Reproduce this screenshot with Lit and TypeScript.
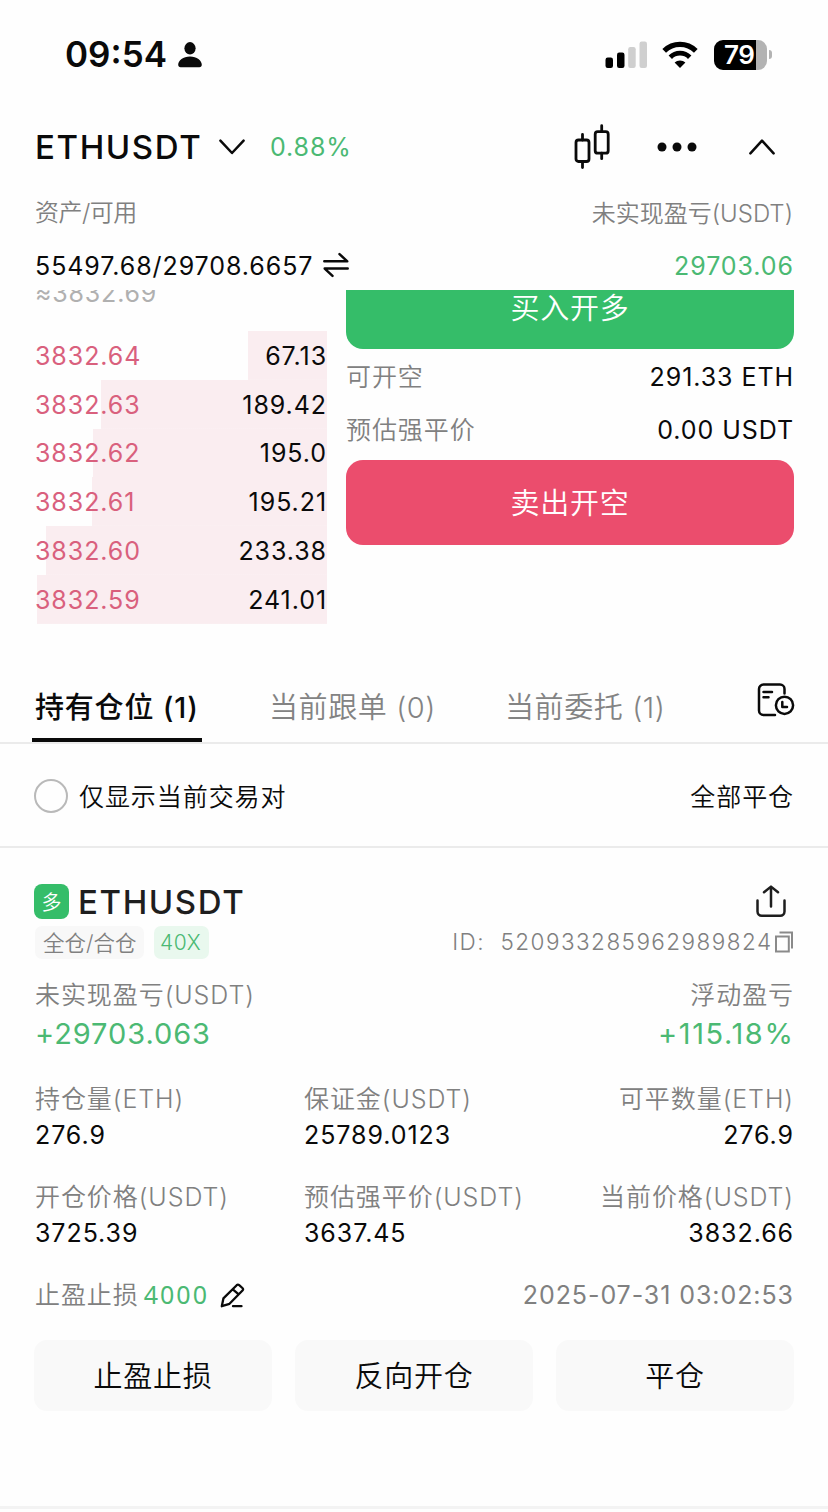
import { LitElement, html, css, svg } from "lit";
import { customElement, property } from "lit/decorators.js";

const asks = [
  { price: "3832.64", qty: "67.13", depth: 79 },
  { price: "3832.63", qty: "189.42", depth: 226 },
  { price: "3832.62", qty: "195.0", depth: 234 },
  { price: "3832.61", qty: "195.21", depth: 235 },
  { price: "3832.60", qty: "233.38", depth: 281 },
  { price: "3832.59", qty: "241.01", depth: 290 },
];

const stats = [
  { label: "持仓量(ETH)", value: "276.9" },
  { label: "保证金(USDT)", value: "25789.0123" },
  { label: "可平数量(ETH)", value: "276.9" },
  { label: "开仓价格(USDT)", value: "3725.39" },
  { label: "预估强平价(USDT)", value: "3637.45" },
  { label: "当前价格(USDT)", value: "3832.66" },
];

const icons: Record<string, { w: number; h: number; body: unknown }> = {
  person: { w: 24, h: 26, body: svg`<ellipse cx="12" cy="6.3" rx="5.6" ry="6.2" fill="currentColor"/><path d="M12 14.6c6.8 0 11.8 4 11.8 8.2 0 1.700-.9 2.400-2.400 2.400H2.600C1.100 25.200.2 24.500.2 22.800c0-4.200 5-8.200 11.800-8.200z" fill="currentColor"/>` },
  signal: { w: 42, h: 28, body: svg`<rect x=".5" y="16.500" width="7.500" height="10.500" rx="2.200" fill="#000"/><rect x="12" y="11.500" width="7.500" height="15.500" rx="2.200" fill="#000"/><rect x="23.200" y="6" width="7.500" height="21" rx="2.200" fill="#cfcfcf"/><rect x="34.500" y=".5" width="7.500" height="26.500" rx="2.200" fill="#cfcfcf"/>` },
  wifi: { w: 36, h: 28, body: svg`<path d="M2.200 9.900a22.500 22.500 0 0 1 31.600 0" fill="none" stroke="#000" stroke-width="5.200"/><path d="M8.300 16.200a13.700 13.700 0 0 1 19.400 0" fill="none" stroke="#000" stroke-width="4.800"/><path d="M18 27l-5.400-5.400a7.800 7.800 0 0 1 10.800 0z" fill="#000"/>` },
  down: { w: 26, h: 16, body: svg`<path d="M1.400 1.600L13 14 24.600 1.600" class="s25"/>` },
  up: { w: 26, h: 16, body: svg`<path d="M1.400 14.400L13 1.600 24.600 14.400" class="s25"/>` },
  candles: { w: 36, h: 46, body: svg`<g class="s25 heavy"><rect x="2" y="16" width="13" height="21.500" rx="2.500"/><path d="M8.500 10.500v5.500M8.500 37.500v6"/><rect x="21.200" y="7.700" width="13" height="21.500" rx="2.500"/><path d="M27.700 1.700v6M27.700 29.200v5.500"/></g>` },
  dots: { w: 40, h: 10, body: svg`<circle cx="5" cy="5" r="4.500" fill="currentColor"/><circle cx="20" cy="5" r="4.500" fill="currentColor"/><circle cx="35" cy="5" r="4.500" fill="currentColor"/>` },
  swap: { w: 26, h: 26, body: svg`<path d="M1.300 9.300h23l-7.800-7.200M24.700 16.600h-23l7.800 7.200" class="s25"/>` },
  history: { w: 38, h: 34, body: svg`<g class="s25"><path d="M18 32H6.500a4.500 4.500 0 0 1-4.500-4.500V6a4.500 4.500 0 0 1 4.500-4.500H23A4.500 4.500 0 0 1 27.500 6v4.500M6.500 9h8.500M6.500 14.200h5"/><circle cx="27.500" cy="22.300" r="8.600"/><path d="M25.300 19v5h4.700"/></g>` },
  share: { w: 30, h: 33, body: svg`<g class="s25"><path d="M1.500 15.500v11a4.300 4.300 0 0 0 4.300 4.300h18.400a4.300 4.300 0 0 0 4.300-4.300v-11"/><path d="M15 21.500V2M8 7.300L15 1.600l7 5.700"/></g>` },
  copy: { w: 19, h: 22, body: svg`<g fill="none" stroke="#8a8a8a" stroke-width="2"><rect x="2" y="5.500" width="12.800" height="15"/><path d="M5.500 1.500h12.500V17.500"/></g>` },
  pencil: { w: 25, h: 25, body: svg`<g class="s2"><path d="M16.700 2.200a1.800 1.800 0 0 1 2.500 0l3.200 2.800a1.800 1.800 0 0 1 .1 2.500L9.500 20.800 1.800 23.200l1.600-7.800zM12.800 6.300l5.900 5M13 23.200h8.500"/></g>` },
};

@customElement("ui-icon")
class UiIcon extends LitElement {
  @property() name = "";
  static styles = css`
    :host { display: block; flex: none; line-height: 0; }
    .s25, .s2 { fill: none; stroke: currentColor; stroke-width: 2.5; stroke-linecap: round; stroke-linejoin: round; }
    .s2 { stroke-width: 2.3; }
    .heavy { stroke-width: 2.8; }
  `;
  render() {
    const i = icons[this.name];
    return html`<svg width=${i.w} height=${i.h} viewBox="0 0 ${i.w} ${i.h}">${i.body}</svg>`;
  }
}

@customElement("app-root")
class AppRoot extends LitElement {
  static styles = css`
    :host { display: block; width: 828px; height: 1512px; overflow: hidden; background: #fefefe; color: #0a0a0a;
      font: 370 25px/30px Inter, "Noto Sans CJK SC", sans-serif; letter-spacing: 0.93px; white-space: nowrap; }
    * { box-sizing: border-box; }
    .row { display: flex; align-items: center; }
    .between { justify-content: space-between; }
    .grow { flex: 1; }
    .pad { padding-left: 35px; padding-right: 35px; }
    .end { margin-right: -1px; }
    .green { color: #4bb973; }
    .grey { color: #808080; }
    .cjk { font-weight: 350; }

    .status { height: 109px; padding: 0 56px 0 65px; }
    .time { font-size: 35px; font-weight: 600; letter-spacing: 0; margin: -1px 11px 0 0; }
    .battery { display: flex; align-items: center; gap: 2px; margin-left: 15px; }
    .cell { width: 53px; height: 30px; border-radius: 9px; background: linear-gradient(90deg, #000 42px, #b3b3b3 42px);
      color: #fff; font-size: 26px; font-weight: 600; letter-spacing: -0.5px; line-height: 30px; padding-left: 10px; }
    .nub { width: 3px; height: 9px; border-radius: 0 4px 4px 0; background: #b3b3b3; }
    .wifi { margin: 0 1px 0 15px; }

    .head { height: 75px; padding-top: 1px; }
    .symbol { font-size: 33px; font-weight: 500; letter-spacing: 1.6px; }
    .down { margin: 0 25px 0 16.6px; }
    .g1 { margin-right: 47px; }
    .g2 { margin-right: 52px; }
    .head .up { margin-right: 18px; }
    .labels { height: 56px; font-size: 24px; letter-spacing: 0; padding-top: 3px; }
    .labels span:first-child { letter-spacing: -0.5px; margin-top: -2px; }
    .values { height: 50px; padding-top: 2px; }
    .values ui-icon { margin: -2px 0 0 9.5px; }

    .trade { height: 340px; overflow: hidden; display: grid; grid-template-columns: 292px 448px; column-gap: 19px; padding-left: 35px; }
    .mark { height: 41px; line-height: 7px; color: #b0b0b0; letter-spacing: 0.8px; }
    .ask { height: 48.8px; padding-top: 1px; display: flex; justify-content: space-between; align-items: center; background-repeat: no-repeat; background-position: right; }
    .ask .price { color: #d9607d; }
    .order { margin-top: -25px; }
    .btn { height: 84px; border-radius: 17px; color: #fff; display: flex; align-items: center; justify-content: center; font-size: 29px; letter-spacing: 0.8px; font-weight: 350; padding-top: 4px; }
    .buy { background: #35bd69; }
    .sell { background: #eb4d6d; height: 85px; margin-top: 4px; padding-top: 3px; }
    .info { height: 55px; }
    .info.last { height: 52px; }

    .tabs { height: 114px; border-bottom: 2px solid #ebebeb; padding: 0 35px; display: flex; align-items: flex-end; }
    .tab { height: 72px; line-height: 76px; font-size: 29px; letter-spacing: 0.6px; color: #838383; font-weight: 350; }
    .tab.on { font-weight: 500; color: #0a0a0a; border-bottom: 4px solid #0a0a0a; margin: 0 67px 0 -3px; padding: 0 3px; width: 170px; letter-spacing: 0.8px; }
    .t2 { width: 236px; }
    .hist { margin: 0 -2px 25px auto; }
    .filter { height: 104px; border-bottom: 2px solid #ebebeb; padding-top: 2px; }
    .filter span:last-child { margin-right: -1px; }
    .filter .lbl { padding-top: 2px; }
    .radio { width: 34px; height: 34px; border-radius: 50%; border: 2px solid #b9b9b9; margin: 0 11px 0 -1px; }

    .title { height: 36px; margin-top: 35px; color: #1e1e1e; }
    .title .symbol { padding-top: 2px; margin-left: -1px; }
    .side { width: 35px; height: 35px; border-radius: 8px; background: #35bd69; color: #fff; font-size: 20px; line-height: 38px; text-align: center; margin: 0 10px 0 -1px; letter-spacing: 0; font-weight: 350; }
    .title .share { margin-right: 7px; }
    .tags { height: 40px; font-size: 22px; margin-top: 3px; }
    .tag { width: 109px; height: 33px; line-height: 35px; border-radius: 7px; padding: 0 8px; background: #f8f8f8; margin-right: 10px; letter-spacing: 0; font-weight: 350; font-size: 21.5px; }
    .tag.lev { width: 55px; background: #e9f8ee; padding: 0 6px; font-size: 21px; letter-spacing: 0.6px; line-height: 34px; }
    .id { letter-spacing: 1.45px; margin: 0 1.5px 0 auto; font-weight: 350; font-size: 22.5px; }
    .pl { height: 65px; }
    .pv { height: 14px; font-size: 29px; }
    .pv .end { letter-spacing: 1.6px; margin-right: -1.5px; }
    .stats { display: grid; grid-template-columns: 269px 1fr auto; margin-top: 40px; row-gap: 26px; }
    .stat { height: 72px; }
    .stat div { height: 36px; line-height: 36px; }
    .stat:nth-child(3n) { text-align: right; margin-right: -1px; }
    .tpsl { height: 50px; margin-top: 19px; }
    .tp { margin: -2px 11px 0 5px; font-family: "Noto Sans"; letter-spacing: 2px; font-weight: 400; }
    .actions { display: grid; grid-template-columns: repeat(3, 238px); gap: 23px; padding: 0 34px; margin-top: 20px; }
    .act { height: 71px; padding-top: 3px; border-radius: 13px; background: #f9f9f9; display: flex; align-items: center; justify-content: center; font-size: 29px; letter-spacing: 0.8px; font-weight: 350; }
    .foot { margin-top: 95px; height: 6px; border-top: 3px solid #f3f3f3; }
  `;
  render() {
    return html`
      <div class="status row">
        <span class="time">09:54</span><ui-icon name="person"></ui-icon><span class="grow"></span>
        <ui-icon name="signal"></ui-icon><ui-icon class="wifi" name="wifi"></ui-icon>
        <div class="battery"><div class="cell">79</div><div class="nub"></div></div>
      </div>
      <div class="head row pad">
        <span class="symbol">ETHUSDT</span><ui-icon class="down" name="down"></ui-icon><span class="green">0.88%</span><span class="grow"></span>
        <ui-icon class="g1" name="candles"></ui-icon><ui-icon class="g2" name="dots"></ui-icon><ui-icon class="up" name="up"></ui-icon>
      </div>
      <div class="labels row between pad grey cjk"><span>资产/可用</span><span>未实现盈亏(USDT)</span></div>
      <div class="values row pad"><span>55497.68/29708.6657</span><ui-icon name="swap"></ui-icon><span class="grow"></span><span class="green end">29703.06</span></div>
      <div class="trade">
        <div>
          <div class="mark">≈3832.69</div>
          ${asks.map((a) => html`<div class="ask" style="background-image:linear-gradient(#faedf0,#faedf0);background-size:${a.depth}px 100%"><span class="price">${a.price}</span><span>${a.qty}</span></div>`)}
        </div>
        <div class="order">
          <div class="btn buy">买入开多</div>
          <div class="info row between"><span class="grey cjk">可开空</span><span>291.33 ETH</span></div>
          <div class="info last row between"><span class="grey cjk">预估强平价</span><span>0.00 USDT</span></div>
          <div class="btn sell">卖出开空</div>
        </div>
      </div>
      <div class="tabs">
        <span class="tab on">持有仓位 (1)</span><span class="tab t2">当前跟单 (0)</span><span class="tab">当前委托 (1)</span>
        <ui-icon class="hist" name="history"></ui-icon>
      </div>
      <div class="filter row pad cjk"><span class="radio"></span><span class="lbl">仅显示当前交易对</span><span class="grow"></span><span class="lbl">全部平仓</span></div>
      <div class="title row pad"><span class="side">多</span><span class="symbol">ETHUSDT</span><span class="grow"></span><ui-icon class="share" name="share"></ui-icon></div>
      <div class="tags row pad grey"><span class="tag">全仓/合仓</span><span class="tag lev green">40X</span><span class="id">ID:&nbsp; 520933285962989824</span><ui-icon name="copy"></ui-icon></div>
      <div class="pl row between pad grey cjk"><span>未实现盈亏(USDT)</span><span class="end">浮动盈亏</span></div>
      <div class="pv row between pad green"><span>+29703.063</span><span class="end">+115.18%</span></div>
      <div class="stats pad">
        ${stats.map((s) => html`<div class="stat"><div class="grey cjk">${s.label}</div><div>${s.value}</div></div>`)}
      </div>
      <div class="tpsl row pad"><span class="grey cjk">止盈止损</span><span class="tp green">4000</span><ui-icon name="pencil"></ui-icon><span class="grow"></span><span class="grey end">2025-07-31 03:02:53</span></div>
      <div class="actions"><div class="act">止盈止损</div><div class="act">反向开仓</div><div class="act">平仓</div></div>
      <div class="foot"></div>
    `;
  }
}
